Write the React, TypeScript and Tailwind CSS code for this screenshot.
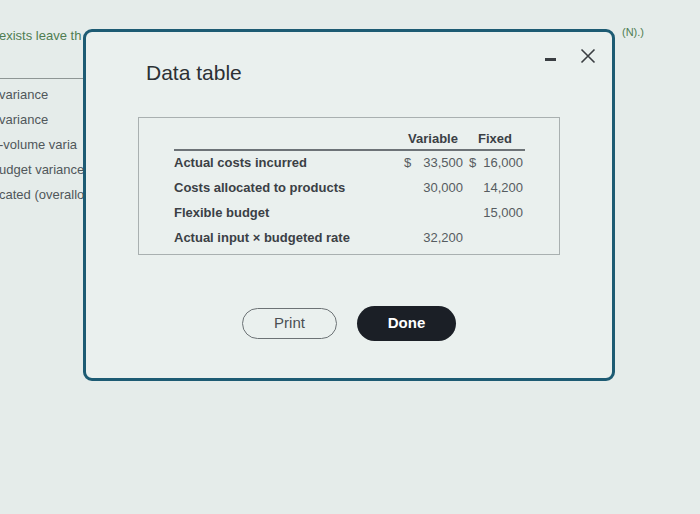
import React from "react";

export default function App() {
  const rows: { label: string; v: string; vd?: boolean; f: string; fd?: boolean }[] = [
    { label: "Actual costs incurred", v: "33,500", vd: true, f: "16,000", fd: true },
    { label: "Costs allocated to products", v: "30,000", f: "14,200" },
    { label: "Flexible budget", v: "", f: "15,000" },
    { label: "Actual input \u00d7 budgeted rate", v: "32,200", f: "" },
  ];
  return (
    <div
      className="relative w-[700px] h-[514px] overflow-hidden bg-[#e5ecea]"
      style={{ fontFamily: '"Liberation Sans", Arial, sans-serif' }}
    >
      {/* background page */}
      <div className="pt-[27px] text-[13px]">
        <div className="ml-[-1px] text-[#4f7d52] leading-[18px]">exists leave th</div>
        <div className="mt-[33px] w-[84px] h-px bg-[#8e9695]" />
        <div className="mt-[3px] flex flex-col text-[#50575a] leading-[25px]">
          <div className="ml-[-1px]">variance</div>
          <div className="ml-[-1px]">variance</div>
          <div className="ml-[-1px]">-volume varia</div>
          <div className="ml-[-1px]">udget variance</div>
          <div className="ml-[-1px]">cated (overallo</div>
        </div>
      </div>
      <div className="absolute left-[622px] top-[24px] text-[11px] text-[#4f7d52]">(N).)</div>

      {/* modal */}
      <div className="absolute left-[83px] top-[29px] w-[532px] h-[352px] rounded-[9px] border-[3px] border-[#1d5b73] bg-[#eaf0ee] flex flex-col">
        <div className="relative">
          <div className="pt-[29px] pl-[60px] text-[21px] leading-[24px] text-[#2c3034]">Data table</div>
          <div className="absolute left-[459px] top-[26px] w-[11px] h-[3px] bg-[#3a3e42]" />
          <svg className="absolute left-[494px] top-[16px]" width="16" height="16" viewBox="0 0 16 16">
            <path d="M1.5 1.5 L14.5 14.5 M14.5 1.5 L1.5 14.5" stroke="#3a3e42" strokeWidth="1.6" fill="none" />
          </svg>
        </div>

        <div className="ml-[52px] mt-[32px] w-[422px] h-[138px] border border-[#a9b0b0] pl-[35px] pt-[11px]">
          <div className="w-[351px] text-[13px]">
            <div className="grid grid-cols-[227px_64px_60px] h-[20px] items-center font-bold text-[#3b4045]">
              <div />
              <div className="text-center">Variable</div>
              <div className="text-center">Fixed</div>
            </div>
            <div className="h-[1.5px] bg-[#6d7377]" />
            {rows.map((r) => (
              <div key={r.label} className="grid grid-cols-[227px_64px_60px] h-[25px] items-center">
                <div className="font-bold text-[#3b4045] whitespace-nowrap">{r.label}</div>
                <div className="flex justify-between pl-[3px] pr-[2px] text-[#565c60]">
                  <span>{r.vd ? "$" : ""}</span>
                  <span>{r.v}</span>
                </div>
                <div className="flex justify-between pl-[4px] pr-[2px] text-[#565c60]">
                  <span>{r.fd ? "$" : ""}</span>
                  <span>{r.f}</span>
                </div>
              </div>
            ))}
          </div>
        </div>

        <div className="mt-[51px] flex items-center justify-center gap-[20px]">
          <div className="w-[95px] h-[31px] rounded-full border-[1.5px] border-[#6c7275] flex items-center justify-center text-[15px] text-[#4a4f53]">
            Print
          </div>
          <div className="w-[99px] h-[35px] rounded-full bg-[#1b1f26] flex items-center justify-center text-[15px] font-bold text-white">
            Done
          </div>
        </div>
      </div>
    </div>
  );
}
